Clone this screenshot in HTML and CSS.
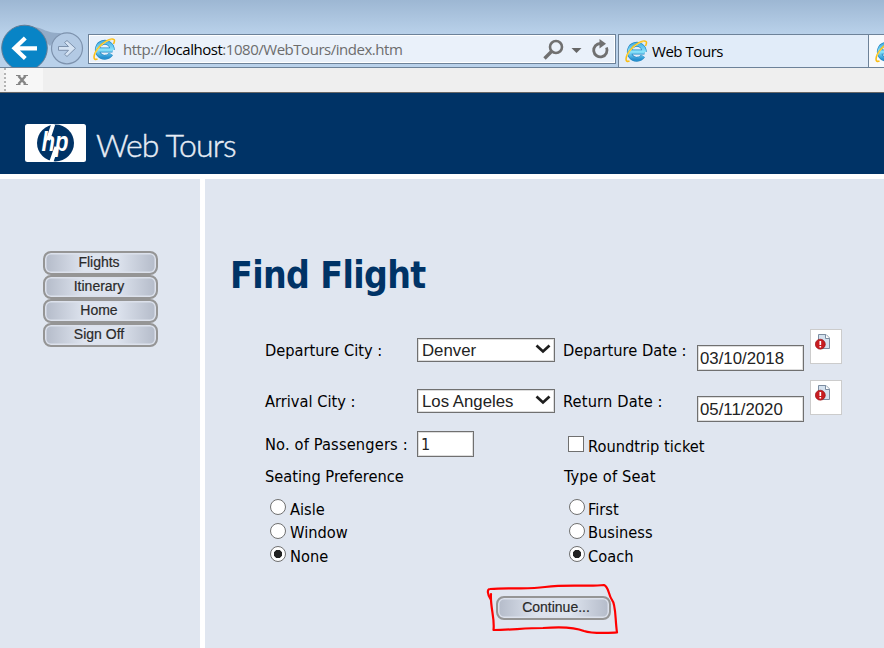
FILE: index.html
```html
<!DOCTYPE html>
<html lang="en">
<head>
    <meta charset="UTF-8">
    <meta name="viewport" content="width=device-width, initial-scale=1.0">
    <title>Web Tours</title>
    <link rel="stylesheet" href="styles.css">
</head>
<body>
    <svg class="defs" width="0" height="0">
        <defs>
            <linearGradient id="ieBlue" x1="0" y1="0" x2="0" y2="1">
                <stop offset="0" stop-color="#4fb4e6"/>
                <stop offset=".5" stop-color="#8be4fb"/>
                <stop offset="1" stop-color="#2791d0"/>
            </linearGradient>
            <symbol id="ie" viewBox="0 0 24 24">
                <path d="M6 13H20.500M19 17A7.500 7.500 0 1 1 20.300 13" fill="none" stroke="#2388c4" stroke-width="4.800"/>
                <path d="M6 13H20.500M19 17A7.500 7.500 0 1 1 20.300 13" fill="none" stroke="url(#ieBlue)" stroke-width="3.400"/>
                <path d="M5.500 22C1 24 .8 18.500 5.500 12C11 4.500 19.500 .5 22 2.500C23 3.500 22.500 5 21.500 7" fill="none" stroke="#f9bd15" stroke-width="1.600"/>
                <path d="M3 17C6 10 13 4 20 2.500" fill="none" stroke="#ffe065" stroke-width=".8"/>
            </symbol>
            <symbol id="broken" viewBox="0 0 16 17">
                <path d="M3.500 .5H11L14.500 4V14.500H3.500Z" fill="#d5e2ef" stroke="#7c8da1"/>
                <path d="M10.500 .5V4.500H14.500" fill="#fff" stroke="#7c8da1"/>
                <circle cx="5.300" cy="10.200" r="5" fill="#c81c20" stroke="#8e1216" stroke-width=".6"/>
                <path d="M5.300 7V11M5.300 12V13.500" stroke="#fff" stroke-width="1.700"/>
            </symbol>
        </defs>
    </svg>

    <div class="browser">
        <div class="nav">
            <svg class="nav-buttons" width="88" height="48" viewBox="0 20 88 48">
                <path d="M34 27C43 28 47 33 58 33C66 33 56 38 50 46L44 40Z" fill="#93abc7"/>
                <circle cx="24.500" cy="48" r="22.800" fill="#0884c6" stroke="#647c94" stroke-width="1"/>
                <path d="M37 48.300H15M25.300 38L14.500 48.300L25.300 58.600" fill="none" stroke="#fff" stroke-width="4.200"/>
                <circle cx="67" cy="48.300" r="15.500" fill="#b3cae4" stroke="#7d92ad" stroke-width="1.200"/>
                <path d="M58.500 46.500H68.500L64.500 42.500L67 40.500L75.500 48.300L67 56.500L64.500 54.300L68.500 50.300H58.500Z" fill="#d5e3f3" stroke="#7d92ad"/>
            </svg>
            <div class="address">
                <svg class="ie-icon" width="24" height="24"><use href="#ie"/></svg>
                <span class="url">http://<b>localhost</b>:1080/WebTours/index.htm</span>
                <svg class="address-tools" width="68" height="22" viewBox="0 0 68 22" fill="none" stroke="#707070">
                    <circle cx="13" cy="9" r="6" stroke-width="2.600"/>
                    <path d="M8.500 13.500L1.500 20.500" stroke-width="3.400"/>
                    <path d="M28.500 10H38.500L33.500 15Z" fill="#666" stroke="none"/>
                    <path d="M63.500 9.500A6.700 6.700 0 1 1 57.500 5.500" stroke-width="2.800"/>
                    <path d="M56.500 1L63 5.800L56.500 10.500Z" fill="#707070" stroke="none"/>
                </svg>
            </div>
            <div class="tab">
                <svg class="ie-icon" width="24" height="24"><use href="#ie"/></svg>
                <span>Web Tours</span>
            </div>
            <div class="tab tab-next">
                <svg class="ie-icon" width="24" height="24"><use href="#ie"/></svg>
            </div>
        </div>
        <div class="toolbar">
            <div class="toolbar-close">
                <svg width="12" height="10" viewBox="0 0 12 10"><path d="M2.500 1L9.500 9M9.500 1L2.500 9" stroke="#858585" stroke-width="2.500"/><path d="M0 .5H4.500M7.500 .5H12M0 9.500H4.500M7.500 9.500H12" stroke="#858585"/></svg>
            </div>
        </div>
    </div>

    <header>
        <svg class="logo" width="61" height="38" viewBox="0 0 61 38">
            <rect width="61" height="38" rx="2.500" fill="#fff"/>
            <circle cx="30.500" cy="19" r="18.500" fill="#003366"/>
            <path d="M28.300 0L23 16M31.500 23L26.300 38" stroke="#fff" stroke-width="4"/>
            <text x="16.500" y="26.500" textLength="27" lengthAdjust="spacingAndGlyphs">hp</text>
        </svg>
        <span class="brand">Web Tours</span>
    </header>

    <div class="frames">
        <nav class="sidebar">
            <button class="pill">Flights</button>
            <button class="pill">Itinerary</button>
            <button class="pill">Home</button>
            <button class="pill">Sign Off</button>
        </nav>

        <main>
            <h1>Find Flight</h1>
            <form>
                <div class="row">
                    <label>Departure City :</label>
                    <div class="select">Denver<svg width="16" height="10" viewBox="0 0 16 10"><path d="M1.500 1.500L8 7.500L14.500 1.500" fill="none" stroke="#1e1e1e" stroke-width="2.700"/></svg></div>
                    <label>Departure Date :</label>
                    <input class="date" type="text" value="03/10/2018">
                    <div class="calendar"><svg width="16" height="17"><use href="#broken"/></svg></div>
                </div>
                <div class="row">
                    <label>Arrival City :</label>
                    <div class="select">Los Angeles<svg width="16" height="10" viewBox="0 0 16 10"><path d="M1.500 1.500L8 7.500L14.500 1.500" fill="none" stroke="#1e1e1e" stroke-width="2.700"/></svg></div>
                    <label class="wide">Return Date :</label>
                    <input class="date" type="text" value="05/11/2020">
                    <div class="calendar"><svg width="16" height="17"><use href="#broken"/></svg></div>
                </div>
                <div class="row passengers">
                    <label class="wide">No. of Passengers :</label>
                    <input class="count" type="text" value="1">
                    <label class="option"><i class="check"></i>Roundtrip ticket</label>
                </div>
                <div class="preferences">
                    <div class="group">
                        <div class="group-title">Seating Preference</div>
                        <label class="option"><i class="radio"></i>Aisle</label>
                        <label class="option"><i class="radio"></i>Window</label>
                        <label class="option"><i class="radio on"></i>None</label>
                    </div>
                    <div class="group">
                        <div class="group-title wide">Type of Seat</div>
                        <label class="option"><i class="radio"></i>First</label>
                        <label class="option"><i class="radio"></i>Business</label>
                        <label class="option"><i class="radio on"></i>Coach</label>
                    </div>
                </div>
                <div class="submit">
                    <button type="button" class="pill">Continue...</button>
                    <svg class="marker" width="134" height="54" viewBox="484 582 134 54">
                        <path d="M491 600C487 594 487 589 490 589C510 587 525 590 545 587C570 584 590 587 604 585C609 587 608 594 612 600C616 604 615 619 617 632.500C607 633 593 634 584 631C572 626 555 627 543 628C525 628 510 630 493.500 630C495 618 490 607 491 594" fill="none" stroke="#f00" stroke-width="2.200" stroke-linecap="round" stroke-linejoin="round"/>
                    </svg>
                </div>
            </form>
        </main>
    </div>
</body>
</html>
```
FILE: styles.css
```css
* { box-sizing: border-box; }
body {
    margin: 0;
    height: 648px;
    overflow: hidden;
    display: flex;
    flex-direction: column;
    background-color: white;
    color: #000;
    font-family: "DejaVu Sans Condensed", "DejaVu Sans", sans-serif;
    font-size: 16.300px;
}
svg { display: block; flex: none; }
.defs { position: absolute; }

/* browser chrome */
.browser {
    height: 93px;
    flex: none;
    border-bottom: 1px solid #666;
}
.nav {
    height: 68px;
    display: flex;
    align-items: flex-end;
    overflow: hidden;
    background: linear-gradient(#9db7d3, #b9d1ea 34px);
    border-bottom: 1px solid #6d8299;
    font-family: "Open Sans", sans-serif;
}
.nav-buttons { margin-bottom: -1px; }
.address {
    width: 528px;
    height: 30px;
    margin-bottom: 3px;
    padding-left: 3px;
    display: flex;
    align-items: center;
    flex: none;
    border: 1px solid #6d8299;
    box-shadow: inset 0 0 0 1px #fff;
    background-color: #eaf1fa;
}
.url {
    margin-left: 7px;
    width: 423px;
    color: #6d6d6d;
    font-size: 15px;
    line-height: 28px;
    letter-spacing: -.47px;
    white-space: nowrap;
}
.url b { font-weight: normal; color: #000; }
.address-tools { margin-left: -3px; }
.tab {
    width: 251px;
    height: 33px;
    margin-left: 2px;
    padding-left: 5px;
    display: flex;
    align-items: center;
    flex: none;
    border: 1px solid #6d8299;
    border-bottom: none;
    background-color: #e1ecf9;
    font-size: 15px;
    letter-spacing: -.45px;
}
.tab span { margin-left: 4px; }
.tab-next { margin-left: -1px; background-color: #f6f9fd; }
.toolbar {
    height: 24px;
    padding-left: 4px;
    background-color: #efefef;
}
.toolbar-close {
    width: 39px;
    height: 23px;
    padding: 7px 0 0 10px;
    border-left: 2px dotted #b4b4b4;
    background-color: #f7f7f7;
}

/* banner */
header {
    height: 81px;
    flex: none;
    display: flex;
    padding: 31px 0 0 25px;
    background-color: #003366;
}
.logo text {
    font: italic bold 27px "Liberation Sans", sans-serif;
    fill: #fff;
}
.brand {
    margin-left: 10px;
    font: 300 32px/41px Lato, sans-serif;
    letter-spacing: -.9px;
    -webkit-text-stroke: .4px #e6ecf5;
    color: #e6ecf5;
}

.frames {
    flex: 1;
    display: flex;
    gap: 5px;
    margin-top: 5px;
}
.sidebar {
    width: 200px;
    padding: 72px 0 0 43px;
    background-color: #e0e6f0;
}
.pill {
    display: block;
    width: 115px;
    height: 24px;
    padding: 0 3px 2px 0;
    border: 2px solid #959595;
    border-radius: 8px;
    box-shadow: inset 0 0 0 1.500px #dce1ec;
    background: linear-gradient(90deg, #b4bbc9, #dde3ee 35%, #dde3ee 65%, #b4bbc9);
    color: #2a2a2a;
    font: 14px/18px "Liberation Sans", sans-serif;
    -webkit-text-stroke: .2px #2a2a2a;
}

main {
    flex: 1;
    background-color: #e0e6f0;
}
h1 {
    margin: 75px 0 0 25px;
    height: 45px;
    color: #003366;
    font: bold 37px/44px "DejaVu Sans Condensed", "DejaVu Sans", sans-serif;
    letter-spacing: -.6px;
    white-space: nowrap;
}
form { margin: 30px 0 0 60px; }
.row {
    height: 51px;
    display: grid;
    grid-template-columns: 152px 146px 134px 113px 32px;
    align-items: start;
}
label, .group-title { white-space: nowrap; line-height: 20px; }
.wide { letter-spacing: .15px; }
.row > label { margin-top: 12px; }
.select {
    width: 138px;
    height: 24px;
    margin-top: 9px;
    padding: 2px 3px 0 4px;
    display: flex;
    align-items: center;
    justify-content: space-between;
    border: 1px solid #707070;
    box-shadow: inset 0 0 0 1px #ddd;
    background-color: white;
    color: #222;
    font: 16.800px "Liberation Sans", sans-serif;
}
.select svg { margin-top: -5px; }
input {
    height: 26px;
    padding: 2px 3px 0 2px;
    border: 1px solid #707070;
    box-shadow: inset 0 0 0 1px #ddd;
    background-color: white;
    color: #222;
    font: 16.800px "Liberation Sans", sans-serif;
}
.date { width: 107px; margin-top: 16px; }
.calendar {
    width: 32px;
    height: 35px;
    padding: 4px 0 0 4px;
    border: 1px solid #ccc;
    background-color: white;
}
.passengers { height: 34px; }
.passengers > label { margin-top: 4px; }
.passengers > .option { margin-top: 4px; }
.count {
    width: 57px;
    padding: 0 3px;
    font: 16px "DejaVu Sans Condensed", "DejaVu Sans", sans-serif;
}
.preferences { display: flex; }
.group { width: 299px; }
.group-title { height: 33px; padding-top: 2px; }
.option {
    height: 23.500px;
    display: flex;
    align-items: center;
}
.radio, .check {
    width: 16px;
    height: 16px;
    margin: -5px 4px 0 5px;
    flex: none;
    border: 1px solid #707070;
    background-color: white;
}
.group:last-child .radio { margin-right: 3px; }
.radio { border-radius: 50%; }
.radio.on { background: radial-gradient(circle, #222 3.800px, white 4.500px); }
.submit {
    position: relative;
    margin: 27px 0 0 231px;
}
.submit .pill { padding: 0 0 1px 5px; }
/* hand-drawn ring around the button */
.marker {
    position: absolute;
    left: -12px;
    top: -14px;
    overflow: visible;
}
```
